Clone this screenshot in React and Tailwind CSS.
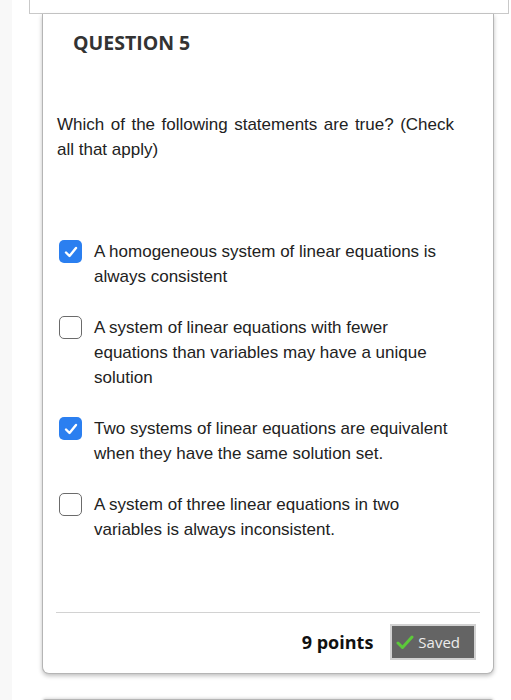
import React from 'react';

const options = [
  { checked: true, text: 'A homogeneous system of linear equations is always consistent' },
  { checked: false, text: 'A system of linear equations with fewer equations than variables may have a unique solution' },
  { checked: true, text: 'Two systems of linear equations are equivalent when they have the same solution set.' },
  { checked: false, text: 'A system of three linear equations in two variables is always inconsistent.' },
];

const CheckBox = ({ checked }) =>
  checked ? (
    <div className="w-[23px] h-[23px] rounded-[5px] bg-[#2b7ff0] flex items-center justify-center shrink-0">
      <svg width="16" height="16" viewBox="0 0 16 16" fill="none">
        <path d="M3 8.5 L6.5 12 L13 4" stroke="white" strokeWidth="2.4" strokeLinecap="round" strokeLinejoin="round" />
      </svg>
    </div>
  ) : (
    <div className="w-[23px] h-[23px] rounded-[5px] border-[1.5px] border-[#6b6b6b] bg-white shrink-0" />
  );

export default function App() {
  return (
    <div className="w-[511px] h-[700px] overflow-hidden bg-white flex">
      {/* left gutter */}
      <div className="w-[12px] h-full bg-[#f8f8f8] shrink-0" />

      <div className="flex-1 flex flex-col">
        {/* bottom of previous block */}
        <div className="ml-[17px] w-[480px] h-[14px] border-x border-b border-[#c9c9c9] shrink-0" />

        {/* question card */}
        <div className="ml-[30px] w-[452px] h-[660px] shrink-0 border-x border-b border-[#b5b5b5] rounded-b-[7px] shadow-[0_2px_4px_rgba(0,0,0,0.25)] bg-white flex flex-col">
          <h2 className="pl-[30px] pt-[16px] text-[19.5px] leading-[26px] font-bold text-[#333] font-['Open_Sans',sans-serif]">
            QUESTION 5
          </h2>

          <p className="ml-[14px] w-[397px] mt-[56px] text-[17px] leading-[25px] text-justify text-[#222] font-['Liberation_Sans',Arial,sans-serif]">
            Which of the following statements are true? (Check all that apply)
          </p>

          <div className="mt-[77px] flex flex-col gap-[26px] pl-[16px]">
            {options.map((o, i) => (
              <div key={i} className="flex items-start gap-[12px]">
                <div className="pt-[1px]">
                  <CheckBox checked={o.checked} />
                </div>
                <span className="w-[362px] text-[17px] leading-[25px] text-[#222] font-['Liberation_Sans',Arial,sans-serif]">
                  {o.text}
                </span>
              </div>
            ))}
          </div>

          <div className="mt-auto mx-[13px] border-t border-[#d2d2d2]" />

          <div className="flex items-center justify-end gap-[17px] pr-[17px] pt-[11px] pb-[13px]">
            <span className="text-[18px] font-bold text-[#111] font-['Open_Sans',sans-serif]">9 points</span>
            <div className="h-[36px] px-[4px] flex items-center gap-[4px] bg-[#646464] border-2 border-[#d2d2d2] text-[#ececec] text-[15px] font-['Open_Sans',sans-serif]">
              <svg width="18" height="16" viewBox="0 0 18 16">
                <path d="M2 9 L6.5 13.5 L16 3" stroke="#5cc93a" strokeWidth="3" fill="none" strokeLinecap="round" strokeLinejoin="round" />
              </svg>
              <span className="pr-[10px]">Saved</span>
            </div>
          </div>
        </div>

        {/* next card top */}
        <div className="ml-[30px] w-[452px] mt-[25px] h-[20px] border-t border-x border-[#b5b5b5] rounded-t-[4px] shadow-[0_-1px_3px_rgba(0,0,0,0.15)] shrink-0" />
      </div>
    </div>
  );
}
